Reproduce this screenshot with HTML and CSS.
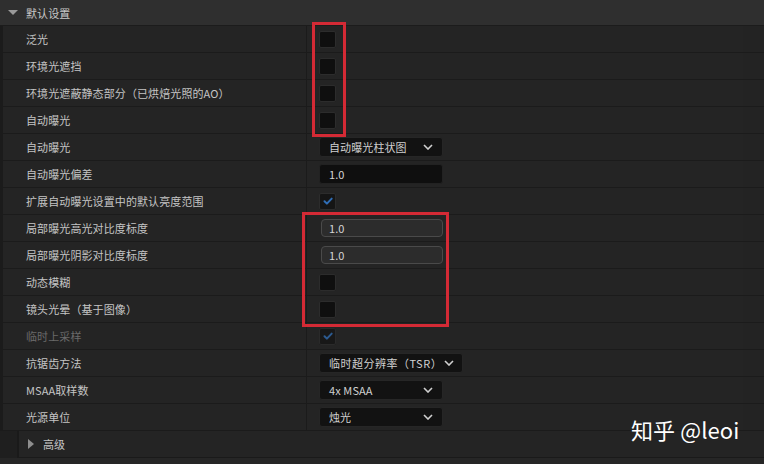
FILE: index.html
```html
<!DOCTYPE html>
<html lang="zh-CN">
<head>
    <meta charset="UTF-8">
    <title>默认设置</title>
    <link rel="stylesheet" href="styles.css">
</head>
<body>
    <div class="panel">
        <div class="section-header">
            <span class="arrow-down"></span>
            <span class="section-title">默认设置</span>
        </div>
        <div class="rows">
            <div class="row"><div class="name">泛光</div><div class="value"><span class="checkbox"></span></div></div>
            <div class="row"><div class="name">环境光遮挡</div><div class="value"><span class="checkbox"></span></div></div>
            <div class="row"><div class="name">环境光遮蔽静态部分（已烘焙光照的AO）</div><div class="value"><span class="checkbox"></span></div></div>
            <div class="row"><div class="name">自动曝光</div><div class="value"><span class="checkbox"></span></div></div>
            <div class="row"><div class="name">自动曝光</div><div class="value">
                <div class="combo">自动曝光柱状图<svg class="chevron" viewBox="0 0 10 6"><path d="M1 1l4 4 4-4" /></svg></div>
            </div></div>
            <div class="row"><div class="name">自动曝光偏差</div><div class="value"><div class="field">1.0</div></div></div>
            <div class="row"><div class="name">扩展自动曝光设置中的默认亮度范围</div><div class="value">
                <span class="checkbox checked"><svg viewBox="0 0 12 12"><path d="M2.5 6.2l2.4 2.4 4.8-5" /></svg></span>
            </div></div>
            <div class="row"><div class="name">局部曝光高光对比度标度</div><div class="value"><div class="field field-light">1.0</div></div></div>
            <div class="row"><div class="name">局部曝光阴影对比度标度</div><div class="value"><div class="field field-light">1.0</div></div></div>
            <div class="row"><div class="name">动态模糊</div><div class="value"><span class="checkbox"></span></div></div>
            <div class="row"><div class="name">镜头光晕（基于图像）</div><div class="value"><span class="checkbox"></span></div></div>
            <div class="row row-disabled"><div class="name">临时上采样</div><div class="value">
                <span class="checkbox checked"><svg viewBox="0 0 12 12"><path d="M2.5 6.2l2.4 2.4 4.8-5" /></svg></span>
            </div></div>
            <div class="row"><div class="name">抗锯齿方法</div><div class="value">
                <div class="combo combo-wide">临时超分辨率（TSR）<svg class="chevron" viewBox="0 0 10 6"><path d="M1 1l4 4 4-4" /></svg></div>
            </div></div>
            <div class="row"><div class="name">MSAA取样数</div><div class="value">
                <div class="combo">4x MSAA<svg class="chevron" viewBox="0 0 10 6"><path d="M1 1l4 4 4-4" /></svg></div>
            </div></div>
            <div class="row"><div class="name">光源单位</div><div class="value">
                <div class="combo">烛光<svg class="chevron" viewBox="0 0 10 6"><path d="M1 1l4 4 4-4" /></svg></div>
            </div></div>
        </div>
        <div class="advanced">
            <div class="advanced-row">
                <span class="arrow-right"></span>
                <span>高级</span>
            </div>
        </div>
        <div class="footer"></div>

        <div class="highlight highlight-a"></div>
        <div class="highlight highlight-b"></div>
        <div class="watermark">知乎 @leoi</div>
    </div>
</body>
</html>
```

FILE: styles.css
```css
body, html {
    margin: 0;
    padding: 0;
    background-color: #1f1f1f;
    overflow: hidden;
}
.panel {
    position: relative;
    width: 764px;
    height: 464px;
    font-family: "Noto Sans CJK SC", "Noto Sans", sans-serif;
    font-size: 11px;
    letter-spacing: 0.1px;
    color: #c4c4c4;
}
.section-header {
    height: 26px;
    display: flex;
    align-items: center;
    background-color: #2f2f2f;
    border-bottom: 1px solid #1c1c1c;
    box-sizing: border-box;
    padding-left: 8px;
}
.arrow-down {
    width: 0;
    height: 0;
    border-left: 5px solid transparent;
    border-right: 5px solid transparent;
    border-top: 5px solid #9a9a9a;
    margin-right: 8px;
}
.section-title {
    color: #c8c8c8;
}
.rows {
    border-left: 3px solid #1b1b1b;
}
.row {
    display: grid;
    grid-template-columns: 304px 1fr;
    height: 27px;
    box-sizing: border-box;
    background-color: #242424;
    border-bottom: 1px solid #1b1b1b;
    box-shadow: inset -21px 0 0 #232323, inset -20px 0 0 #1c1c1c;
}
.name {
    display: flex;
    align-items: center;
    padding-left: 23px;
    border-right: 1px solid #1b1b1b;
    white-space: nowrap;
}
.value {
    display: flex;
    align-items: center;
    padding-left: 12px;
}
.row-disabled .name {
    color: #6a6a6a;
}
.row-disabled .checkbox {
    opacity: 0.75;
}
.checkbox {
    width: 17px;
    height: 17px;
    box-sizing: border-box;
    background-color: #0f0f0f;
    border: 1px solid #2c2c2c;
    border-radius: 2px;
    display: flex;
    align-items: center;
    justify-content: center;
}
.checkbox.checked {
    background-color: #151515;
}
.checkbox svg {
    width: 12px;
    height: 12px;
    fill: none;
    stroke: #2f6db5;
    stroke-width: 2;
    stroke-linecap: round;
    stroke-linejoin: round;
}
.combo {
    width: 124px;
    height: 20px;
    box-sizing: border-box;
    display: flex;
    align-items: center;
    justify-content: space-between;
    padding: 0 9px 0 9px;
    background-color: #121212;
    border: 1px solid #262626;
    border-radius: 3px;
    color: #d0d0d0;
    white-space: nowrap;
}
.combo-wide {
    width: 144px;
    padding-right: 8px;
    letter-spacing: 0.5px;
}
.chevron {
    width: 10px;
    height: 6px;
    fill: none;
    stroke: #d0d0d0;
    stroke-width: 1.6;
}
.field {
    width: 124px;
    height: 20px;
    box-sizing: border-box;
    display: flex;
    align-items: center;
    padding-left: 9px;
    background-color: #0f0f0f;
    border: 1px solid #222222;
    border-radius: 3px;
    color: #d4d4d4;
}
.field-light {
    width: 122px;
    height: 18px;
    margin-left: 2px;
    padding-left: 7px;
    background-color: #2c2c2c;
    border: 1px solid #4a4a4a;
    border-radius: 4px;
}
.advanced {
    height: 27px;
    box-sizing: border-box;
    background-color: #1f1f1f;
    padding-left: 17px;
}
.advanced-row {
    height: 27px;
    box-sizing: border-box;
    display: flex;
    align-items: center;
    padding-left: 9px;
    background-color: #242424;
    border-left: 2px solid #1a1a1a;
    border-bottom: 1px solid #1a1a1a;
}
.arrow-right {
    width: 0;
    height: 0;
    border-top: 5px solid transparent;
    border-bottom: 5px solid transparent;
    border-left: 6px solid #8e8e8e;
    margin-right: 9px;
}
.footer {
    height: 6px;
    background-color: #262626;
}
.highlight {
    position: absolute;
    border: 3px solid #d42a35;
    box-sizing: border-box;
}
.highlight-a {
    left: 312px;
    top: 22px;
    width: 34px;
    height: 115px;
}
.highlight-b {
    left: 302px;
    top: 212px;
    width: 147px;
    height: 115px;
}
.watermark {
    position: absolute;
    left: 631px;
    top: 413px;
    font-size: 22px;
    color: #ffffff;
    white-space: nowrap;
}
```
